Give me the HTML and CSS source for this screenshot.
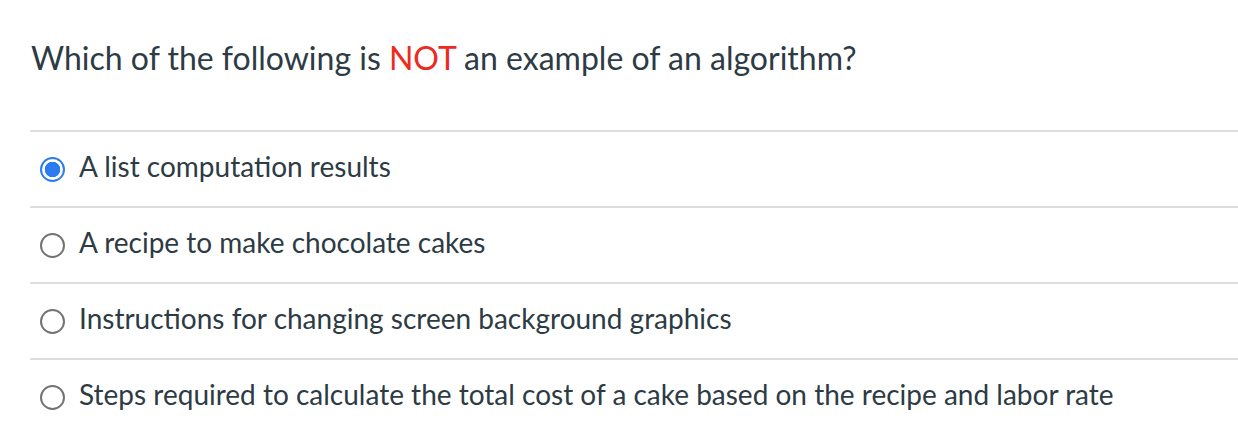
FILE: index.html
```html
<!DOCTYPE html>
<html>
<head>
<meta charset="utf-8">
<link rel="stylesheet" href="styles.css">
</head>
<body>
<div class="quiz">
  <p class="question">Which of the following is <span class="not">NOT</span> an example of an algorithm?</p>
  <div class="answers">
    <label class="answer"><span class="radio checked"></span><span class="text">A list computation results</span></label>
    <label class="answer"><span class="radio"></span><span class="text">A recipe to make chocolate cakes</span></label>
    <label class="answer"><span class="radio"></span><span class="text">Instructions for changing screen background graphics</span></label>
    <label class="answer"><span class="radio"></span><span class="text">Steps required to calculate the total cost of a cake based on the recipe and labor rate</span></label>
  </div>
</div>
</body>
</html>
```
FILE: styles.css
```css
html, body {
  margin: 0;
  padding: 0;
  background: #fff;
}
body {
  font-family: Lato, "Noto Sans", sans-serif;
  color: #2d3b45;
}
.quiz {
  padding: 36px 0 0 30px;
}
.question {
  margin: 0 0 0 1px;
  font-size: 32px;
  line-height: 44px;
  height: 94px;
}
.not {
  color: #ee2a1f;
}
.answers {
  display: flex;
  flex-direction: column;
}
.answer {
  display: flex;
  align-items: center;
  height: 74px;
  border-top: 2px solid #dddddd;
  font-size: 28px;
}
.radio {
  box-sizing: border-box;
  width: 25px;
  height: 25px;
  margin: 0 14px 0 10px;
  border-radius: 50%;
  border: 2px solid #737373;
  flex: none;
}
.radio.checked {
  border: 2px solid #2d7bf4;
  background: radial-gradient(circle, #2d7bf4 0 7.5px, #fff 8px);
}
.text {
  position: relative;
  top: -3px;
}
```
